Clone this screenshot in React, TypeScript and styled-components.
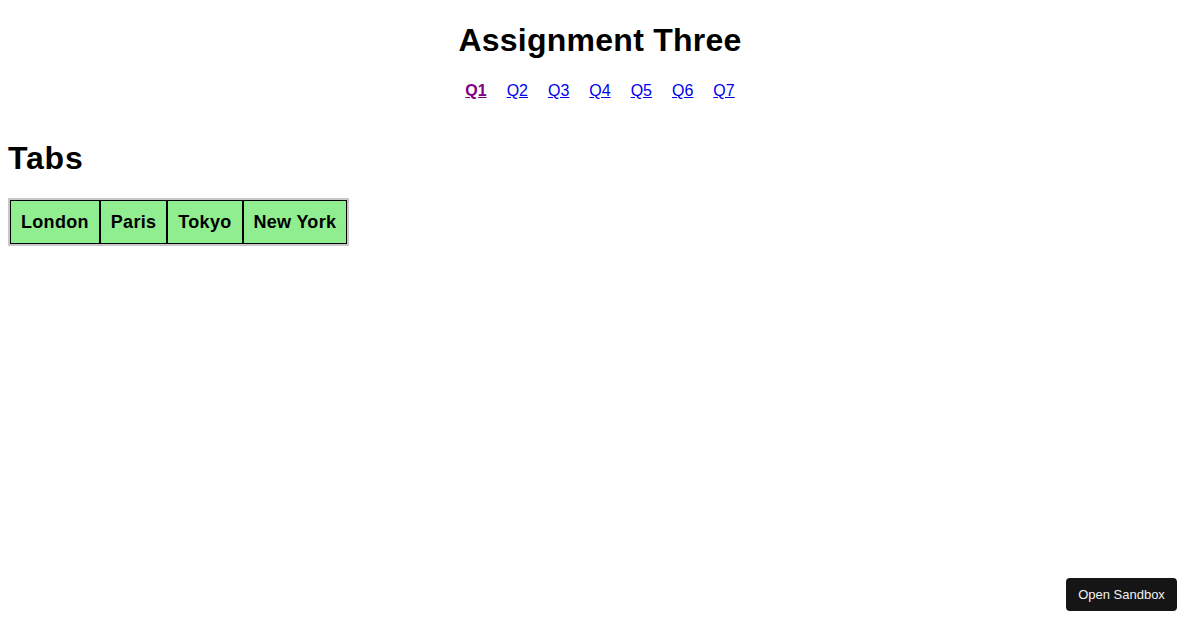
import { useState } from "react";
import styled, { createGlobalStyle } from "styled-components";

const GlobalStyle = createGlobalStyle`
    body{
        margin: 8px;
        font-family: "Liberation Sans", Arial, sans-serif;
        background: white;
        color: black;
    }
`
const Header = styled.header`
    text-align: center;
`
const Title = styled.h1`
    font-size: 32px;
    margin: 14px 0 0;
    line-height: 37px;
    letter-spacing: 0.25px;
`
const Nav = styled.nav`
    display: flex;
    justify-content: center;
    gap: 20px;
    margin: 23px 0 0;
    font-size: 16px;
    line-height: 18px;
`
const NavLink = styled.a<{active:boolean}>`
    color: ${props=> props.active ? "#800080" : "#0000ee"};
    font-weight: ${props=> props.active ? "bold" : "normal"};
    text-decoration: underline;
    cursor: pointer;
`
const SectionTitle = styled.h1`
    font-size: 32px;
    line-height: 37px;
    letter-spacing: 0.8px;
    margin: 40px 0 21px;
`
const TabBar = styled.div`
    display: inline-flex;
    border: 2px solid #c8c8c8;
`
const Tab = styled.button`
    background-color: #90ee90;
    border: 1px solid black;
    font-family: "Liberation Sans", Arial, sans-serif;
    font-weight: bold;
    font-size: 18px;
    line-height: 22px;
    letter-spacing: 0.3px;
    padding: 10px 10px;
    margin: 0;
    color: black;
    cursor: pointer;
`
const SandboxButton = styled.button`
    position: fixed;
    right: 23px;
    bottom: 19px;
    width: 111px;
    height: 33px;
    background-color: #151515;
    color: #f2f2f2;
    border: none;
    border-radius: 4px;
    font-family: "Liberation Sans", Arial, sans-serif;
    font-size: 13px;
    cursor: pointer;
`

const questions = ["Q1","Q2","Q3","Q4","Q5","Q6","Q7"];
const cities = ["London","Paris","Tokyo","New York"];

function App(){
    const [current, setCurrent] = useState("Q1");
    return (
        <>
        <GlobalStyle/>
        <Header>
            <Title>Assignment Three</Title>
            <Nav>
                {questions.map(q=>
                    <NavLink key={q} active={q===current} onClick={()=>setCurrent(q)}>{q}</NavLink>
                )}
            </Nav>
        </Header>
        <SectionTitle>Tabs</SectionTitle>
        <TabBar>
            {cities.map(c=> <Tab key={c}>{c}</Tab>)}
        </TabBar>
        <SandboxButton>Open Sandbox</SandboxButton>
        </>
    )
}
export default App;
